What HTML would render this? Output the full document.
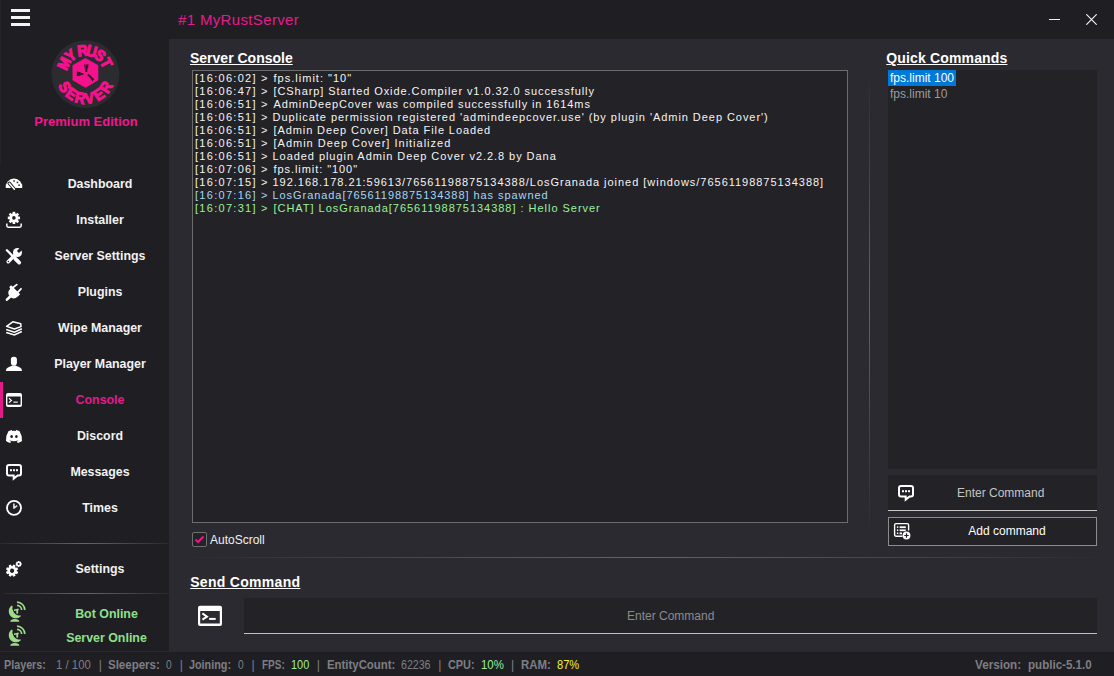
<!DOCTYPE html>
<html><head><meta charset="utf-8">
<style>
*{margin:0;padding:0;box-sizing:border-box}
html,body{width:1114px;height:676px;overflow:hidden;background:#1f1e23;font-family:"Liberation Sans",sans-serif;color:#fff}
.a{position:absolute;white-space:pre;line-height:1}
#content{position:absolute;left:169px;top:39px;width:945px;height:612px;background:#2b2a30}
.nav{position:absolute;left:15.5px;width:169px;text-align:center;font-weight:bold;font-size:12.4px;line-height:1;color:#f2f2f2}
.ic{position:absolute;left:5px}
.hd{font-weight:bold;font-size:14px;color:#fff;text-decoration:underline;text-decoration-thickness:1px;text-underline-offset:1px}
.cl{position:absolute;font-size:11px;line-height:1;white-space:pre;color:#f4f4f4}
.sb{position:absolute;top:658.5px;transform-origin:0 0;font-size:12.2px;line-height:1;white-space:pre;color:#7e7e83}
.sb.b{font-weight:bold}
</style></head><body>

<!-- title bar -->
<div class="a" style="left:0;top:0;width:1px;height:165px;background:#242328"></div>
<div class="a" style="left:11px;top:9px;width:19px;height:3px;background:#f4f4f4"></div>
<div class="a" style="left:11px;top:16px;width:19px;height:3px;background:#f4f4f4"></div>
<div class="a" style="left:11px;top:23px;width:19px;height:3px;background:#f4f4f4"></div>
<div class="a" style="left:178px;top:12px;font-size:15px;letter-spacing:0.35px;color:#e31c8c">#1 MyRustServer</div>
<div class="a" style="left:1049px;top:19px;width:11px;height:1px;background:#f0f0f0"></div>
<svg class="a" style="left:1086px;top:14px" width="11" height="11" viewBox="0 0 11 11"><path d="M0.3 0.3L10.7 10.7M10.7 0.3L0.3 10.7" stroke="#f0f0f0" stroke-width="1.2"/></svg>


<!-- logo -->
<svg class="a" style="left:0;top:0" width="169" height="120" viewBox="0 0 169 120">
<circle cx="85.4" cy="74.2" r="34" fill="#2c2b30"/>
<polygon points="85.40,57.90 98.30,65.35 98.30,80.25 85.40,87.70 72.50,80.25 72.50,65.35" fill="#f5118c"/>
<g fill="#2a1a22"><path d="M84 64.4 H88.6 L88 68.4 H84.6 Z"/><rect x="85.3" y="68.4" width="2" height="3.6"/><rect x="84.8" y="64.4" width="0.6" height="4" fill="#f5118c"/><path d="M76.8 71.6 L80.8 72.2 V75.6 L76.8 76.2 Z"/><rect x="80.8" y="73" width="2.6" height="2"/><path d="M87.2 75.2 L88.6 73.8 L91.4 76.4 L90 77.8 Z"/><path d="M90 77.8 L91.4 76.4 L94.4 79.2 L92.4 81.2 Z"/></g>
<g fill="#f7118d" stroke="#f7118d" stroke-width="1.1" stroke-linejoin="miter" font-family="Liberation Sans" font-weight="bold" font-size="15.5" text-anchor="middle"><text transform="translate(85.4 74.2) rotate(-63.7) translate(0 -24.2) scale(0.92 1.0)" y="5.8">M</text><text transform="translate(85.4 74.2) rotate(-38) translate(0 -24.2) scale(0.92 1.0)" y="5.8">Y</text><text transform="translate(85.4 74.2) rotate(-7) translate(0 -24.2) scale(0.92 1.0)" y="5.8">R</text><text transform="translate(85.4 74.2) rotate(15.5) translate(0 -24.2) scale(0.92 1.0)" y="5.8">U</text><text transform="translate(85.4 74.2) rotate(38) translate(0 -24.2) scale(0.92 1.0)" y="5.8">S</text><text transform="translate(85.4 74.2) rotate(62) translate(0 -24.2) scale(0.92 1.0)" y="5.8">T</text><text transform="translate(85.4 74.2) rotate(58.4) translate(0 23.8) scale(0.92 1.0)" y="5.8">S</text><text transform="translate(85.4 74.2) rotate(35.4) translate(0 23.8) scale(0.92 1.0)" y="5.8">E</text><text transform="translate(85.4 74.2) rotate(12.5) translate(0 23.8) scale(0.92 1.0)" y="5.8">R</text><text transform="translate(85.4 74.2) rotate(-9.5) translate(0 23.8) scale(0.92 1.0)" y="5.8">V</text><text transform="translate(85.4 74.2) rotate(-33.4) translate(0 23.8) scale(0.92 1.0)" y="5.8">E</text><text transform="translate(85.4 74.2) rotate(-58) translate(0 23.8) scale(0.92 1.0)" y="5.8">R</text></g>
</svg>
<div class="a" style="left:0;width:172px;text-align:center;top:114.9px;font-size:13px;font-weight:bold;color:#f3168e">Premium Edition</div>

<!-- nav -->
<div class="nav" style="top:177.8px">Dashboard</div>
<div class="nav" style="top:213.8px">Installer</div>
<div class="nav" style="top:249.8px">Server Settings</div>
<div class="nav" style="top:285.8px">Plugins</div>
<div class="nav" style="top:321.8px">Wipe Manager</div>
<div class="nav" style="top:357.8px">Player Manager</div>
<div class="nav" style="top:393.8px;color:#e3198c">Console</div>
<div class="nav" style="top:429.8px">Discord</div>
<div class="nav" style="top:465.8px">Messages</div>
<div class="nav" style="top:501.8px">Times</div>
<div class="a" style="left:0;top:382px;width:3px;height:36px;background:#e3198c"></div>

<!-- separators -->
<div class="a" style="left:0;top:543px;width:169px;height:1px;background:linear-gradient(90deg,rgba(247,19,143,0.15),#f7138f 50%,rgba(247,19,143,0.15))"></div>
<div class="nav" style="top:563px">Settings</div>
<div class="a" style="left:4px;top:593px;width:165px;height:1px;background:linear-gradient(90deg,rgba(247,19,143,0.15),#f7138f 50%,rgba(247,19,143,0.15))"></div>
<div class="nav" style="top:607.7px;left:22px;color:#8fe08a">Bot Online</div>
<div class="nav" style="top:631.5px;left:22px;color:#8fe08a">Server Online</div>

<!-- content panel -->
<div id="content"></div>

<!-- content -->
<div class="a hd" style="left:190px;top:51.1px">Server Console</div>
<div class="a hd" style="left:886.3px;top:51.1px;letter-spacing:0.15px">Quick Commands</div>

<div class="a" style="left:192px;top:70px;width:656px;height:453px;background:#232227;border:1px solid #6c6c6c"></div>
<div class="cl" style="top:72.9px;left:195px;letter-spacing:1.289px">[16:06:02]</div><div class="cl" style="top:72.9px;left:260.9px">&gt;</div><div class="cl" style="top:72.9px;left:273.5px;letter-spacing:1.014px">fps.limit: "10"</div>
<div class="cl" style="top:85.9px;left:195px;letter-spacing:1.289px">[16:06:47]</div><div class="cl" style="top:85.9px;left:260.9px">&gt;</div><div class="cl" style="top:85.9px;left:273.5px;letter-spacing:0.925px">[CSharp] Started Oxide.Compiler v1.0.32.0 successfully</div>
<div class="cl" style="top:98.9px;left:195px;letter-spacing:1.289px">[16:06:51]</div><div class="cl" style="top:98.9px;left:260.9px">&gt;</div><div class="cl" style="top:98.9px;left:273.5px;letter-spacing:0.892px">AdminDeepCover was compiled successfully in 1614ms</div>
<div class="cl" style="top:111.9px;left:195px;letter-spacing:1.289px">[16:06:51]</div><div class="cl" style="top:111.9px;left:260.9px">&gt;</div><div class="cl" style="top:111.9px;left:272.5px;letter-spacing:0.949px">Duplicate permission registered 'admindeepcover.use' (by plugin 'Admin Deep Cover')</div>
<div class="cl" style="top:124.9px;left:195px;letter-spacing:1.289px">[16:06:51]</div><div class="cl" style="top:124.9px;left:260.9px">&gt;</div><div class="cl" style="top:124.9px;left:273.5px;letter-spacing:0.903px">[Admin Deep Cover] Data File Loaded</div>
<div class="cl" style="top:137.9px;left:195px;letter-spacing:1.289px">[16:06:51]</div><div class="cl" style="top:137.9px;left:260.9px">&gt;</div><div class="cl" style="top:137.9px;left:273.5px;letter-spacing:0.993px">[Admin Deep Cover] Initialized</div>
<div class="cl" style="top:150.9px;left:195px;letter-spacing:1.289px">[16:06:51]</div><div class="cl" style="top:150.9px;left:260.9px">&gt;</div><div class="cl" style="top:150.9px;left:272.5px;letter-spacing:0.948px">Loaded plugin Admin Deep Cover v2.2.8 by Dana</div>
<div class="cl" style="top:163.9px;left:195px;letter-spacing:1.289px">[16:07:06]</div><div class="cl" style="top:163.9px;left:260.9px">&gt;</div><div class="cl" style="top:163.9px;left:273.5px;letter-spacing:0.933px">fps.limit: "100"</div>
<div class="cl" style="top:176.9px;left:195px;letter-spacing:1.289px">[16:07:15]</div><div class="cl" style="top:176.9px;left:260.9px">&gt;</div><div class="cl" style="top:176.9px;left:272.5px;letter-spacing:0.972px">192.168.178.21:59613/76561198875134388/LosGranada joined [windows/76561198875134388]</div>
<div class="cl" style="top:189.9px;left:195px;letter-spacing:1.289px;color:#a4d8f4">[16:07:16]</div><div class="cl" style="top:189.9px;left:260.9px;color:#a4d8f4">&gt;</div><div class="cl" style="top:189.9px;left:272.5px;letter-spacing:0.935px;color:#a4d8f4">LosGranada[76561198875134388] has spawned</div>
<div class="cl" style="top:202.9px;left:195px;letter-spacing:1.289px;color:#9af29a">[16:07:31]</div><div class="cl" style="top:202.9px;left:260.9px;color:#9af29a">&gt;</div><div class="cl" style="top:202.9px;left:273.5px;letter-spacing:0.968px;color:#9af29a">[CHAT] LosGranada[76561198875134388] : Hello Server</div>

<div class="a" style="left:869px;top:72px;width:1px;height:462px;background:linear-gradient(180deg,rgba(247,19,143,0),#f7138f 50%,rgba(247,19,143,0))"></div>

<div class="a" style="left:888px;top:70px;width:209px;height:399px;background:#232227"></div>
<div class="a" style="left:888px;top:70px;width:68px;height:16px;background:#0078d7"></div>
<div class="a" style="left:890px;top:72.4px;font-size:12px;color:#fff">fps.limit 100</div>
<div class="a" style="left:890px;top:88.4px;font-size:12px;color:#9c9c9c">fps.limit 10</div>

<div class="a" style="left:888px;top:475px;width:209px;height:36px;background:#232227;border-bottom:1.5px solid #c8c8c8"></div>
<div class="a" style="left:957px;top:487px;font-size:12px;color:#c4c4c4">Enter Command</div>
<div class="a" style="left:888px;top:517px;width:209px;height:29px;border:1px solid #8c8c8c;background:#232227"></div>
<div class="a" style="left:968.3px;top:524.5px;font-size:12px;color:#fff">Add command</div>

<!-- autoscroll -->
<div class="a" style="left:192px;top:532px;width:15px;height:15px;border:1px solid #707070;border-radius:2px;background:#232227"></div>
<svg class="a" style="left:194px;top:534px" width="11" height="11" viewBox="0 0 11 11"><path d="M1.5 5.5L4 8L9.5 2.5" fill="none" stroke="#f0148c" stroke-width="2"/></svg>
<div class="a" style="left:210px;top:533.8px;font-size:12px;color:#f0f0f0">AutoScroll</div>

<div class="a" style="left:180px;top:557px;width:930px;height:1px;background:linear-gradient(90deg,rgba(247,19,143,0),#f7138f 50%,rgba(247,19,143,0))"></div>

<div class="a hd" style="left:190.2px;top:575px;letter-spacing:0.3px">Send Command</div>
<div class="a" style="left:244px;top:598px;width:853px;height:36px;background:#232227;border-bottom:1.5px solid #c0c0c0"></div>
<div class="a" style="left:627px;top:610.3px;font-size:12px;color:#8c8c8c">Enter Command</div>

<!-- status bar -->
<div class="a" style="left:0;top:651px;width:1114px;height:1px;background:#29282d"></div>
<div class="sb b" style="left:4.4px;transform:scaleX(0.883)">Players:</div>
<div class="sb" style="left:56.27px;transform:scaleX(0.9333)">1 / 100</div>
<div class="sb" style="left:98.8px">|</div>
<div class="sb b" style="left:108px;transform:scaleX(0.9444)">Sleepers:</div>
<div class="sb" style="left:166.1px;transform:scaleX(0.8286)">0</div>
<div class="sb" style="left:179.8px">|</div>
<div class="sb b" style="left:189.1px;transform:scaleX(0.8872)">Joining:</div>
<div class="sb" style="left:238px;transform:scaleX(0.8286)">0</div>
<div class="sb" style="left:251.5px">|</div>
<div class="sb b" style="left:262px;transform:scaleX(0.8185)">FPS:</div>
<div class="sb" style="left:290.81px;transform:scaleX(0.8947);color:#98f098">100</div>
<div class="sb" style="left:316.7px">|</div>
<div class="sb b" style="left:326.7px;transform:scaleX(0.9347)">EntityCount:</div>
<div class="sb" style="left:401.2px;transform:scaleX(0.8706)">62236</div>
<div class="sb" style="left:438.3px">|</div>
<div class="sb b" style="left:448.2px;transform:scaleX(0.8931)">CPU:</div>
<div class="sb" style="left:480.77px;transform:scaleX(0.9348);color:#98f098">10%</div>
<div class="sb" style="left:510.9px">|</div>
<div class="sb b" style="left:520.9px;transform:scaleX(0.9355)">RAM:</div>
<div class="sb" style="left:557.1px;transform:scaleX(0.9125);color:#f2f22e">87%</div>
<div class="sb b" style="left:975.2px;transform:scaleX(0.9574)">Version:</div>
<div class="sb b" style="left:1027.8px;transform:scaleX(0.9493)">public-5.1.0</div>



<!-- icons overlay -->
<svg class="a" style="left:0;top:0" width="1114" height="676" viewBox="0 0 1114 676">
 <g fill="#fff">
  <!-- dashboard gauge -->
  <path d="M5.77 188 A8.3 8.3 0 1 1 22.23 188 Z"/>
  <g stroke="#1f1e23" stroke-width="3.4" stroke-linecap="round"><path d="M9.2 183.2 L14.6 189.5"/></g>
  <path d="M9.2 183.2 L14.4 189.2" stroke="#fff" stroke-width="1.5" stroke-linecap="round"/>
  <rect x="13.3" y="180.2" width="1.5" height="1.5" fill="#1f1e23"/>
  <rect x="16.7" y="181.7" width="1.5" height="1.5" fill="#1f1e23"/>
  <rect x="18.3" y="184.5" width="1.6" height="1.4" fill="#1f1e23"/>

  <!-- installer gear -->
  <g transform="translate(13.9 217.9)">
   <circle r="4.6"/>
   <g id="t8"><rect x="-1.3" y="-6.1" width="2.6" height="12.2"/><rect x="-1.3" y="-6.1" width="2.6" height="12.2" transform="rotate(45)"/><rect x="-1.3" y="-6.1" width="2.6" height="12.2" transform="rotate(90)"/><rect x="-1.3" y="-6.1" width="2.6" height="12.2" transform="rotate(135)"/></g>
   <circle r="1.8" fill="#1f1e23"/>
  </g>
  <path d="M6.8 223.4 V225.8 Q6.8 227.2 8.2 227.2 H19.8 Q21.2 227.2 21.2 225.8 V223.4" fill="none" stroke="#fff" stroke-width="1.5"/>

  <!-- server settings wrench+screwdriver -->
  <path d="M6.9 250.3 L13.5 256.9" stroke="#fff" stroke-width="2.3" stroke-linecap="round"/>
  <path d="M15.2 258.6 L19.2 262.6" stroke="#fff" stroke-width="3.8" stroke-linecap="round"/>
  <path d="M8.2 261.8 L15.4 254.6" stroke="#fff" stroke-width="3.4" stroke-linecap="round"/>
  <circle cx="17.5" cy="252.5" r="4.5"/>
  <polygon points="18.9,253.1 16.9,251.1 20.9,246.6 23.4,249.1" fill="#1f1e23"/>
  <circle cx="8.4" cy="261.6" r="0.75" fill="#1f1e23"/>
  <!-- plugins plug -->
  <path d="M12.6 287.8 L16.8 284.6" stroke="#fff" stroke-width="1.8" stroke-linecap="round"/>
  <path d="M17.4 292.6 L21 288.8" stroke="#fff" stroke-width="1.8" stroke-linecap="round"/>
  <g transform="translate(13.5 292) scale(1.13) translate(-13.5 -292)"><path d="M11.4 286 L19.4 294 L17.6 295.8 Q13.5 299.5 10.4 296.2 Q7.2 292.8 10.6 289.2 L9.8 287.6 Z"/></g>
  <path d="M10 296.8 L6.9 299.6" stroke="#fff" stroke-width="2.6" stroke-linecap="round"/>
  <!-- wipe manager layers -->
  <path d="M6.6 326.4 L12.8 321.8 L20.8 323.8 L21 326.6 L14.4 329 Z" fill="none" stroke="#fff" stroke-width="1.5" stroke-linejoin="round"/>
  <path d="M6.2 329.6 L14.4 332.2 L21.8 328.8" fill="none" stroke="#fff" stroke-width="1.6"/>
  <path d="M6.2 332.4 L14.4 335 L21.8 331.6" fill="none" stroke="#fff" stroke-width="1.6"/>

  <!-- player manager person -->
  <rect x="10.9" y="356.8" width="6" height="8.8" rx="2.8"/>
  <path d="M5.9 371 Q5.9 368.2 9 367 L12.4 365.6 H15.4 L19 367 Q22 368.2 22 371 Z"/>

  <!-- console icon -->
  <path d="M6 395 Q6 393 8 393 H20 Q22 393 22 395 V405 Q22 407 20 407 H8 Q6 407 6 405 Z M7.4 396.4 V404.8 H20.6 V396.4 Z" fill-rule="evenodd"/>
  <path d="M9 398.3 L11.4 400.4 L9 402.6" fill="none" stroke="#fff" stroke-width="1.2"/>
  <rect x="13.4" y="401.6" width="4.4" height="1.1"/>

  <!-- discord -->
  <path d="M19.6 431.2 A14.8 14.8 0 0 0 16.1 430.1 L15.7 430.9 A13.7 13.7 0 0 0 12.3 430.9 L11.9 430.1 A14.8 14.8 0 0 0 8.4 431.2 Q5.9 435 6 441 A15 15 0 0 0 10.3 443 L11.2 441.6 A9.5 9.5 0 0 1 9.6 440.8 L10 440.5 A10.6 10.6 0 0 0 18 440.5 L18.4 440.8 A9.5 9.5 0 0 1 16.8 441.6 L17.7 443 A15 15 0 0 0 22 441 Q22.1 435 19.6 431.2 Z"/>
  <ellipse cx="11.6" cy="436.6" rx="1.3" ry="1.5" fill="#1f1e23"/>
  <ellipse cx="16.4" cy="436.6" rx="1.3" ry="1.5" fill="#1f1e23"/>

  <!-- messages bubble -->
  <g id="bub">
   <path d="M9 465 H19 Q21 465 21 467 V473.4 Q21 475.4 19 475.4 H17.6 L13.7 478.6 V475.4 H9 Q7 475.4 7 473.4 V467 Q7 465 9 465 Z" fill="none" stroke="#fff" stroke-width="2" stroke-linejoin="miter" stroke-miterlimit="3"/>
   <rect x="10" y="469.2" width="2" height="2"/><rect x="13" y="469.2" width="2" height="2"/><rect x="16" y="469.2" width="2" height="2"/>
  </g>
  <use href="#bub" transform="translate(892 21)"/>

  <!-- times clock -->
  <circle cx="14" cy="507.9" r="7" fill="none" stroke="#fff" stroke-width="1.8"/>
  <path d="M13.9 503.4 V508.2 L17.2 505.6" fill="none" stroke="#e0e0e0" stroke-width="1.6" stroke-linejoin="round"/>

  <!-- settings gears -->
  <g transform="translate(12.1 570.7) rotate(22.5)">
   <circle r="4.7"/>
   <use href="#t8"/>
   <circle r="2.1" fill="#1f1e23"/>
  </g>
  <g transform="translate(18.7 564)">
   <circle r="2.5"/>
   <g transform="scale(0.5)"><use href="#t8"/></g>
   <circle r="1" fill="#1f1e23"/>
  </g>

  <!-- add command icon -->
  <path d="M896 523.6 H907.2 Q908.6 523.6 908.6 525 V530.4 M902.6 536.2 H896 Q894.6 536.2 894.6 534.8 V525 Q894.6 523.6 896 523.6" fill="none" stroke="#fff" stroke-width="1.4"/>
  <rect x="896.9" y="526.3" width="1.4" height="1.6"/><rect x="899.6" y="526.3" width="6.2" height="1.8"/>
  <rect x="896.9" y="529.4" width="1.4" height="1.6"/><rect x="899.6" y="529.4" width="6.2" height="1.8"/>
  <rect x="896.9" y="532.5" width="1.4" height="1.6"/><rect x="899.6" y="532.5" width="2.4" height="1.8"/>
  <circle cx="906.5" cy="535.5" r="3.9"/>
  <path d="M906.5 533.3 V537.7 M904.3 535.5 H908.7" stroke="#232227" stroke-width="1.2"/>

  <!-- send terminal icon -->
  <path d="M200 605.8 H220 Q222 605.8 222 607.8 V624 Q222 626 220 626 H200 Q198 626 198 624 V607.8 Q198 605.8 200 605.8 Z M200.2 610.9 V623.5 H219.8 V610.9 Z" fill-rule="evenodd"/>
  <path d="M202.4 613.4 L207 616.6 L202.4 619.6" fill="none" stroke="#fff" stroke-width="1.9"/>
  <rect x="209.1" y="617.9" width="6.6" height="2"/>
 </g>

 <!-- satellite dishes -->
 <g id="dish" fill="#9fdc8a">
  <path d="M11.8 605.6 Q8.4 608 8.8 612 Q9.4 616.4 13.4 618 Q17.4 619.2 20.6 616.4 L21 615.6 Q16.6 615.8 13.8 612.4 Q11.6 609.6 12.6 606 Z"/>
  <path d="M13.2 606.6 L13.6 607 Q12.8 610 14.8 612.6 Q17.2 615.2 20.6 615 L21.2 614.4 Q18.6 611 13.2 606.6 Z" fill="#9fdc8a" opacity="0.0"/>
  <path d="M14 610.2 L18.6 609.4" stroke="#9fdc8a" stroke-width="1.6"/>
  <path d="M17.2 609.6 V613.6" stroke="#9fdc8a" stroke-width="1.8"/>
  <path d="M10.2 621.8 Q10.6 619 14.8 619 Q19 619 19.4 621.8 Z"/>
  <path d="M17 605.4 A4.6 4.6 0 0 1 21.6 610" fill="none" stroke="#9fdc8a" stroke-width="1.7"/>
  <path d="M17 602.2 A7.8 7.8 0 0 1 24.8 610" fill="none" stroke="#9fdc8a" stroke-width="1.7"/>
 </g>
 <use href="#dish" transform="translate(0 24)"/>
</svg>

</body></html>
